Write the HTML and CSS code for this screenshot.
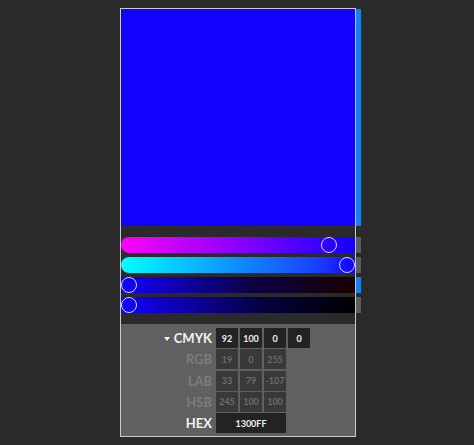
FILE: index.html
```html
<!DOCTYPE html>
<html>
<head>
<meta charset="utf-8">
<link rel="stylesheet" href="styles.css">
</head>
<body>
<div class="wrap">
  <div class="picker">
    <div class="field"></div>
    <div class="sliders">
      <div class="slider s-c round"><span class="handle" style="left:200px"></span></div>
      <div class="slider s-m round"><span class="handle" style="left:218px"></span></div>
      <div class="slider s-y"><span class="handle" style="left:0px"></span></div>
      <div class="slider s-k"><span class="handle" style="left:0px"></span></div>
    </div>
    <div class="panel">
      <div class="label active"><span class="caret"></span>CMYK</div>
      <div class="cell on">92</div>
      <div class="cell on">100</div>
      <div class="cell on">0</div>
      <div class="cell on">0</div>

      <div class="label">RGB</div>
      <div class="cell">19</div>
      <div class="cell">0</div>
      <div class="cell">255</div>
      <div class="empty"></div>

      <div class="label">LAB</div>
      <div class="cell">33</div>
      <div class="cell">79</div>
      <div class="cell">-107</div>
      <div class="empty"></div>

      <div class="label">HSB</div>
      <div class="cell">245</div>
      <div class="cell">100</div>
      <div class="cell">100</div>
      <div class="empty"></div>

      <div class="label active">HEX</div>
      <div class="cell on hex">1300FF</div>
      <div class="empty"></div>
    </div>
  </div>
  <div class="strip">
    <div class="tab field-tab"></div>
    <div class="tab-gap1"></div>
    <div class="tab"></div>
    <div class="tab"></div>
    <div class="tab sel"></div>
    <div class="tab"></div>
  </div>
</div>
</body>
</html>
```
FILE: styles.css
```css
html, body {
  margin: 0;
  padding: 0;
  background: #2a2a2a;
  font-family: "Lato", "Open Sans", sans-serif;
}
.wrap {
  display: flex;
  align-items: flex-start;
  margin: 8px 0 0 120px;
}
.picker {
  width: 234px;
  border: 1px solid #c9c9cf;
  background: #2a2a2a;
  display: flex;
  flex-direction: column;
}
.field {
  height: 217px;
  background: #1300ff;
}
.sliders {
  display: flex;
  flex-direction: column;
  gap: 4px;
  padding: 11px 0 11px 0;
}
.slider {
  position: relative;
  height: 16px;
}
.slider.round {
  border-radius: 8px 0 0 8px;
}
.s-c { background: linear-gradient(to right, #ff00ff, #1300ff); }
.s-m { background: linear-gradient(to right, #00ffff, #1a3dff 85%, #1300ff); }
.s-y { background: linear-gradient(to right, #1300ff, #0c0048 55%, #170000); }
.s-k { background: linear-gradient(to right, #1300ff, #060040 60%, #000000); }
.handle {
  position: absolute;
  top: 0;
  width: 16px;
  height: 16px;
  box-sizing: border-box;
  border: 1.5px solid #d6d4ff;
  border-radius: 50%;
}
.panel {
  background: #606060;
  display: grid;
  grid-template-columns: 93px 22px 22px 22px 22px;
  grid-auto-rows: 20px;
  column-gap: 2px;
  row-gap: 1.3px;
  padding: 4px 0 3px 0;
  align-items: stretch;
}
.label {
  display: flex;
  align-items: center;
  justify-content: flex-end;
  padding-right: 2px;
  font-size: 13px;
  font-weight: 700;
  color: #7c7c7c;
}
.label.active {
  color: #f2f2f2;
}
.caret {
  width: 0;
  height: 0;
  border-left: 3.5px solid transparent;
  border-right: 3.5px solid transparent;
  border-top: 4px solid #f2f2f2;
  margin-right: 4px;
  margin-top: 1px;
}
.cell {
  background: #393939;
  color: #6c6c6c;
  font-size: 9px;
  font-weight: 700;
  display: flex;
  align-items: center;
  justify-content: center;
}
.cell.on {
  background: #232323;
  color: #f0f0f0;
}
.cell.hex {
  grid-column: span 3;
}
.strip {
  display: flex;
  flex-direction: column;
  width: 5px;
  padding-top: 1px;
}
.tab {
  height: 16px;
  background: #5c5c5c;
  margin-bottom: 4px;
}
.tab.field-tab {
  height: 217px;
  background: #1a7fe6;
  margin-bottom: 0;
}
.tab-gap1 {
  height: 11px;
}
.tab.sel {
  background: #1a7fe6;
}
```
